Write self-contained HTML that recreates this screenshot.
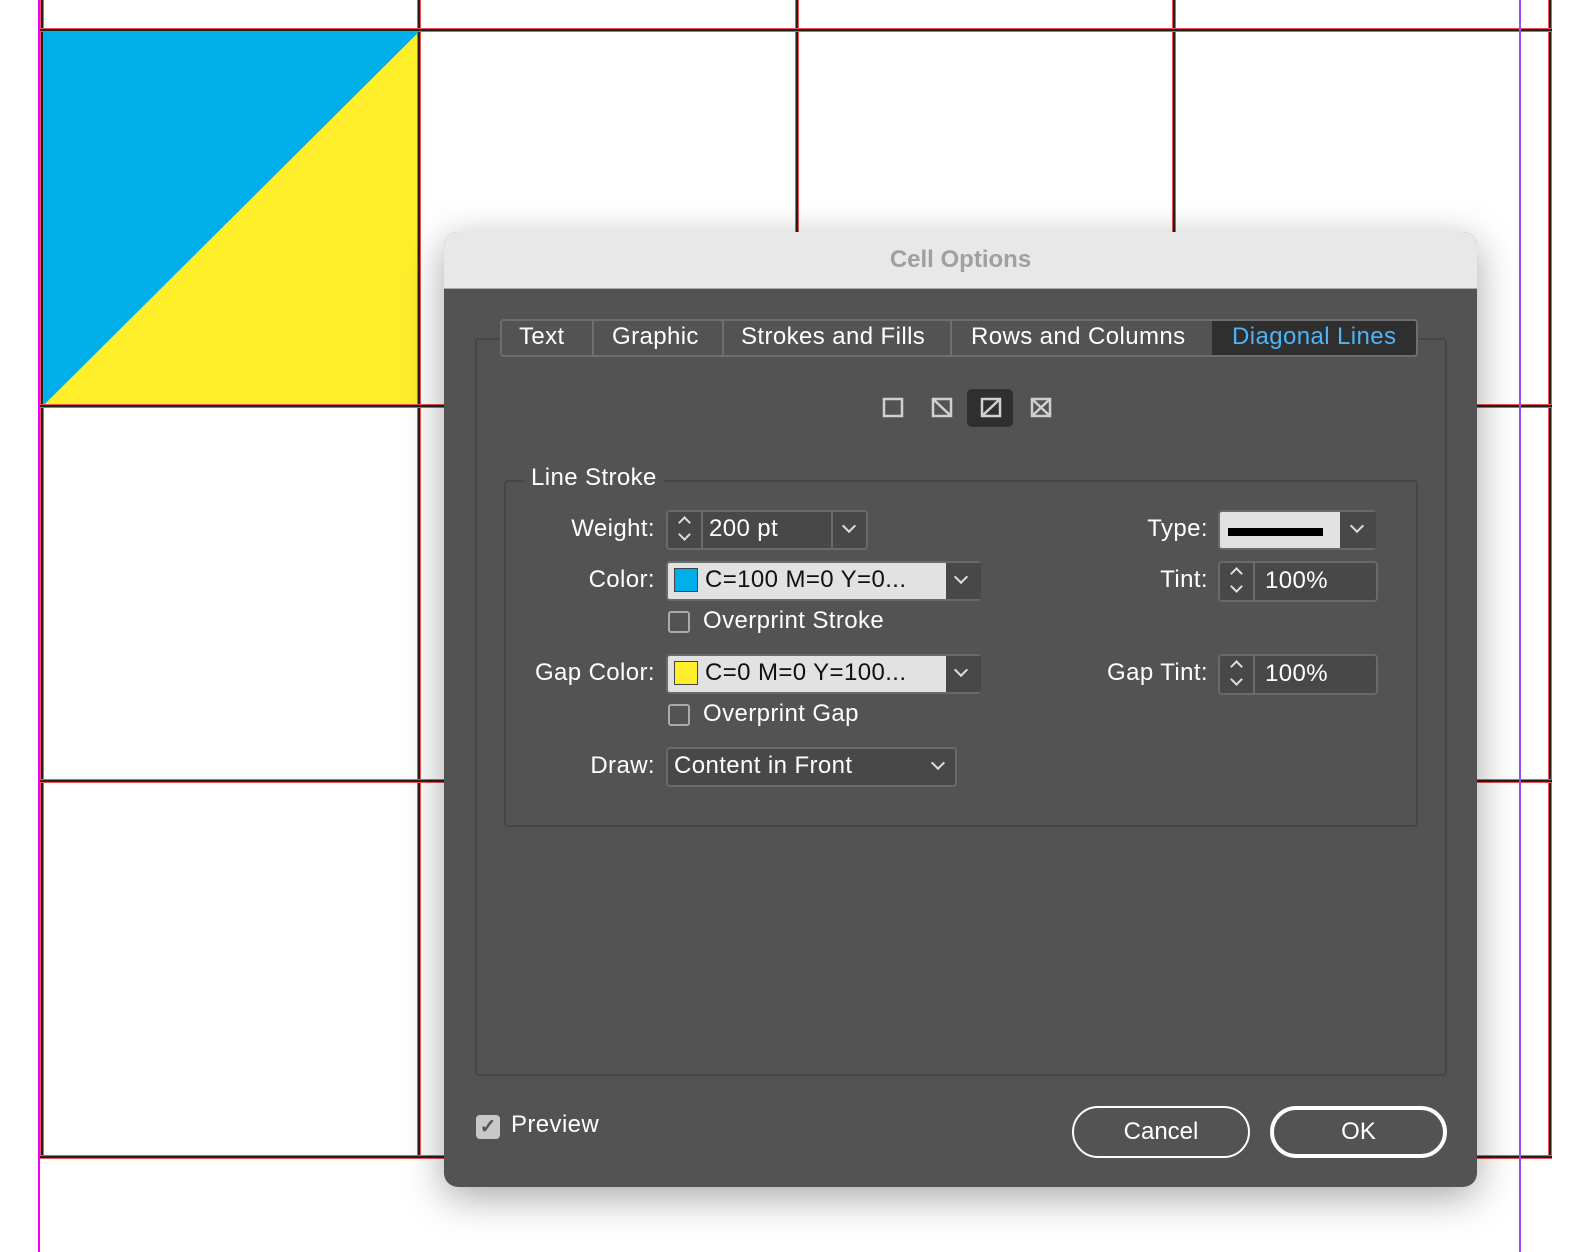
<!DOCTYPE html>
<html><head><meta charset="utf-8"><style>
*{margin:0;padding:0;box-sizing:border-box}
body{width:1588px;height:1252px;background:#fff;position:relative;overflow:hidden;font-family:"Liberation Sans",sans-serif}
.a{position:absolute}
.v{position:absolute;top:0;width:4px;height:1159px;border-left:1px solid #e55;border-right:1px solid #e55;background:#222}
.h{position:absolute;left:40px;width:1512px;height:4px;border-top:1px solid #e55;border-bottom:1px solid #e55;background:#222}
.t{color:#fff;font-size:24px;position:absolute;white-space:nowrap;letter-spacing:0.4px}
.lbl{text-align:right;width:200px}
.box{position:absolute;border:2px solid #6a6a6a;border-radius:4px;background:#484848}
.chev{position:absolute;width:10px;height:10px;border-right:2px solid #ddd;border-bottom:2px solid #ddd;transform:rotate(45deg)}
.up{position:absolute;width:9px;height:9px;border-left:2px solid #ddd;border-top:2px solid #ddd;transform:rotate(45deg)}
.dn{position:absolute;width:9px;height:9px;border-right:2px solid #ddd;border-bottom:2px solid #ddd;transform:rotate(45deg)}
.cb{position:absolute;width:22px;height:22px;border:2px solid #aaa;border-radius:3px}
</style></head><body>
<svg class="a" style="left:43px;top:32px" width="376" height="374"><polygon points="0,0 376,0 0,374" fill="#00aeea"/><polygon points="376,0 376,374 0,374" fill="#ffee2a"/></svg>
<div class="v" style="left:40px"></div>
<div class="v" style="left:417px"></div>
<div class="v" style="left:795px"></div>
<div class="v" style="left:1172px"></div>
<div class="v" style="left:1548px"></div>
<div class="h" style="top:28px"></div>
<div class="h" style="top:404px"></div>
<div class="h" style="top:779px"></div>
<div class="h" style="top:1155px"></div>
<div class="a" style="left:38px;top:0;width:2px;height:1252px;background:#e0f"></div>
<div class="a" style="left:1519px;top:0;width:2px;height:1252px;background:#9a4cf0"></div>
<div class="a" style="left:444px;top:232px;width:1033px;height:955px;border-radius:14px;background:#535353;overflow:hidden;box-shadow:0 10px 40px rgba(0,0,0,.35)">
 <div class="a" style="left:0;top:0;width:1033px;height:57px;background:#e8e8e8;border-bottom:1px solid #aaa;text-align:center;line-height:56px;font-size:24px;font-weight:bold;color:#a0a0a0">Cell Options</div>
</div>
<div class="a" style="left:475px;top:338px;width:972px;height:738px;border:2px solid #464646;border-radius:4px"></div>
<div class="a" style="left:500px;top:319px;width:918px;height:38px;border:2px solid #6e6e6e;border-radius:4px;background:#535353;overflow:hidden">
 <div class="a" style="left:90px;top:0;width:2px;height:36px;background:#6e6e6e"></div>
 <div class="a" style="left:220px;top:0;width:2px;height:36px;background:#6e6e6e"></div>
 <div class="a" style="left:448px;top:0;width:2px;height:36px;background:#6e6e6e"></div>
 <div class="a" style="left:710px;top:0;width:210px;height:36px;background:#2f2f2f"></div>
</div>
<div class="t" style="left:519px;top:323px">Text</div>
<div class="t" style="left:612px;top:323px">Graphic</div>
<div class="t" style="left:741px;top:323px">Strokes and Fills</div>
<div class="t" style="left:971px;top:323px">Rows and Columns</div>
<div class="t" style="left:1232px;top:323px;color:#4db5f5">Diagonal Lines</div>
<div class="a" style="left:967px;top:389px;width:46px;height:38px;background:#2f2f2f;border-radius:5px"></div>
<svg class="a" style="left:880px;top:395px" width="180" height="26" fill="none" stroke="#d0d0d0" stroke-width="2.5">
<rect x="4" y="4" width="18" height="17"/>
<rect x="53" y="4" width="18" height="17"/><line x1="53" y1="4" x2="71" y2="21"/>
<rect x="102" y="4" width="18" height="17"/><line x1="102" y1="21" x2="120" y2="4"/>
<rect x="152" y="4" width="18" height="17"/><line x1="152" y1="4" x2="170" y2="21"/><line x1="152" y1="21" x2="170" y2="4"/>
</svg>
<div class="a" style="left:504px;top:480px;width:914px;height:347px;border:2px solid #464646;border-radius:4px"></div>
<div class="t" style="left:524px;top:464px;background:#535353;padding:0 7px">Line Stroke</div>
<div class="t lbl" style="left:455px;top:515px">Weight:</div>
<div class="box" style="left:666px;top:510px;width:202px;height:40px"><div class="a" style="left:33px;top:0;width:2px;height:36px;background:#6a6a6a"></div><div class="a" style="left:163px;top:0;width:2px;height:36px;background:#6a6a6a"></div></div>
<div class="up" style="left:680px;top:518px"></div><div class="dn" style="left:680px;top:530px"></div>
<div class="t" style="left:709px;top:515px">200 pt</div>
<div class="chev" style="left:844px;top:521px"></div>
<div class="t lbl" style="left:455px;top:566px">Color:</div>
<div class="box" style="left:666px;top:561px;width:315px;height:40px;background:#e2e2e2"><div class="a" style="left:278px;top:0;width:35px;height:36px;background:#484848"></div></div>
<div class="a" style="left:674px;top:568px;width:24px;height:24px;background:#00aeea;border:1px solid #444"></div>
<div class="t" style="left:705px;top:566px;color:#111">C=100 M=0 Y=0...</div>
<div class="chev" style="left:956px;top:572px"></div>
<div class="cb" style="left:668px;top:611px"></div>
<div class="t" style="left:703px;top:607px">Overprint Stroke</div>
<div class="t lbl" style="left:455px;top:659px">Gap Color:</div>
<div class="box" style="left:666px;top:654px;width:315px;height:40px;background:#e2e2e2"><div class="a" style="left:278px;top:0;width:35px;height:36px;background:#484848"></div></div>
<div class="a" style="left:674px;top:661px;width:24px;height:24px;background:#ffee2a;border:1px solid #444"></div>
<div class="t" style="left:705px;top:659px;color:#111">C=0 M=0 Y=100...</div>
<div class="chev" style="left:956px;top:665px"></div>
<div class="cb" style="left:668px;top:704px"></div>
<div class="t" style="left:703px;top:700px">Overprint Gap</div>
<div class="t lbl" style="left:455px;top:752px">Draw:</div>
<div class="box" style="left:666px;top:747px;width:291px;height:40px"></div>
<div class="t" style="left:674px;top:752px">Content in Front</div>
<div class="chev" style="left:933px;top:758px"></div>
<div class="t lbl" style="left:1008px;top:515px">Type:</div>
<div class="box" style="left:1218px;top:510px;width:158px;height:40px;background:#e2e2e2"><div class="a" style="left:120px;top:0;width:36px;height:36px;background:#484848"></div></div>
<div class="a" style="left:1228px;top:528px;width:95px;height:8px;background:#000"></div>
<div class="chev" style="left:1352px;top:521px"></div>
<div class="t lbl" style="left:1008px;top:566px">Tint:</div>
<div class="box" style="left:1218px;top:561px;width:160px;height:41px"><div class="a" style="left:33px;top:0;width:2px;height:37px;background:#6a6a6a"></div></div>
<div class="up" style="left:1232px;top:569px"></div><div class="dn" style="left:1232px;top:582px"></div>
<div class="t" style="left:1265px;top:567px">100%</div>
<div class="t lbl" style="left:1008px;top:659px">Gap Tint:</div>
<div class="box" style="left:1218px;top:654px;width:160px;height:41px"><div class="a" style="left:33px;top:0;width:2px;height:37px;background:#6a6a6a"></div></div>
<div class="up" style="left:1232px;top:662px"></div><div class="dn" style="left:1232px;top:675px"></div>
<div class="t" style="left:1265px;top:660px">100%</div>
<div class="a" style="left:476px;top:1115px;width:24px;height:24px;background:#c8c8c8;border-radius:4px;color:#555;font-size:20px;line-height:24px;text-align:center;font-weight:bold">✓</div>
<div class="t" style="left:511px;top:1111px">Preview</div>
<div class="a" style="left:1072px;top:1106px;width:178px;height:52px;border:2px solid #fff;border-radius:26px;color:#fff;font-size:24px;text-align:center;line-height:48px">Cancel</div>
<div class="a" style="left:1270px;top:1106px;width:177px;height:52px;border:4px solid #fff;border-radius:26px;color:#fff;font-size:24px;text-align:center;line-height:44px">OK</div>
</body></html>
